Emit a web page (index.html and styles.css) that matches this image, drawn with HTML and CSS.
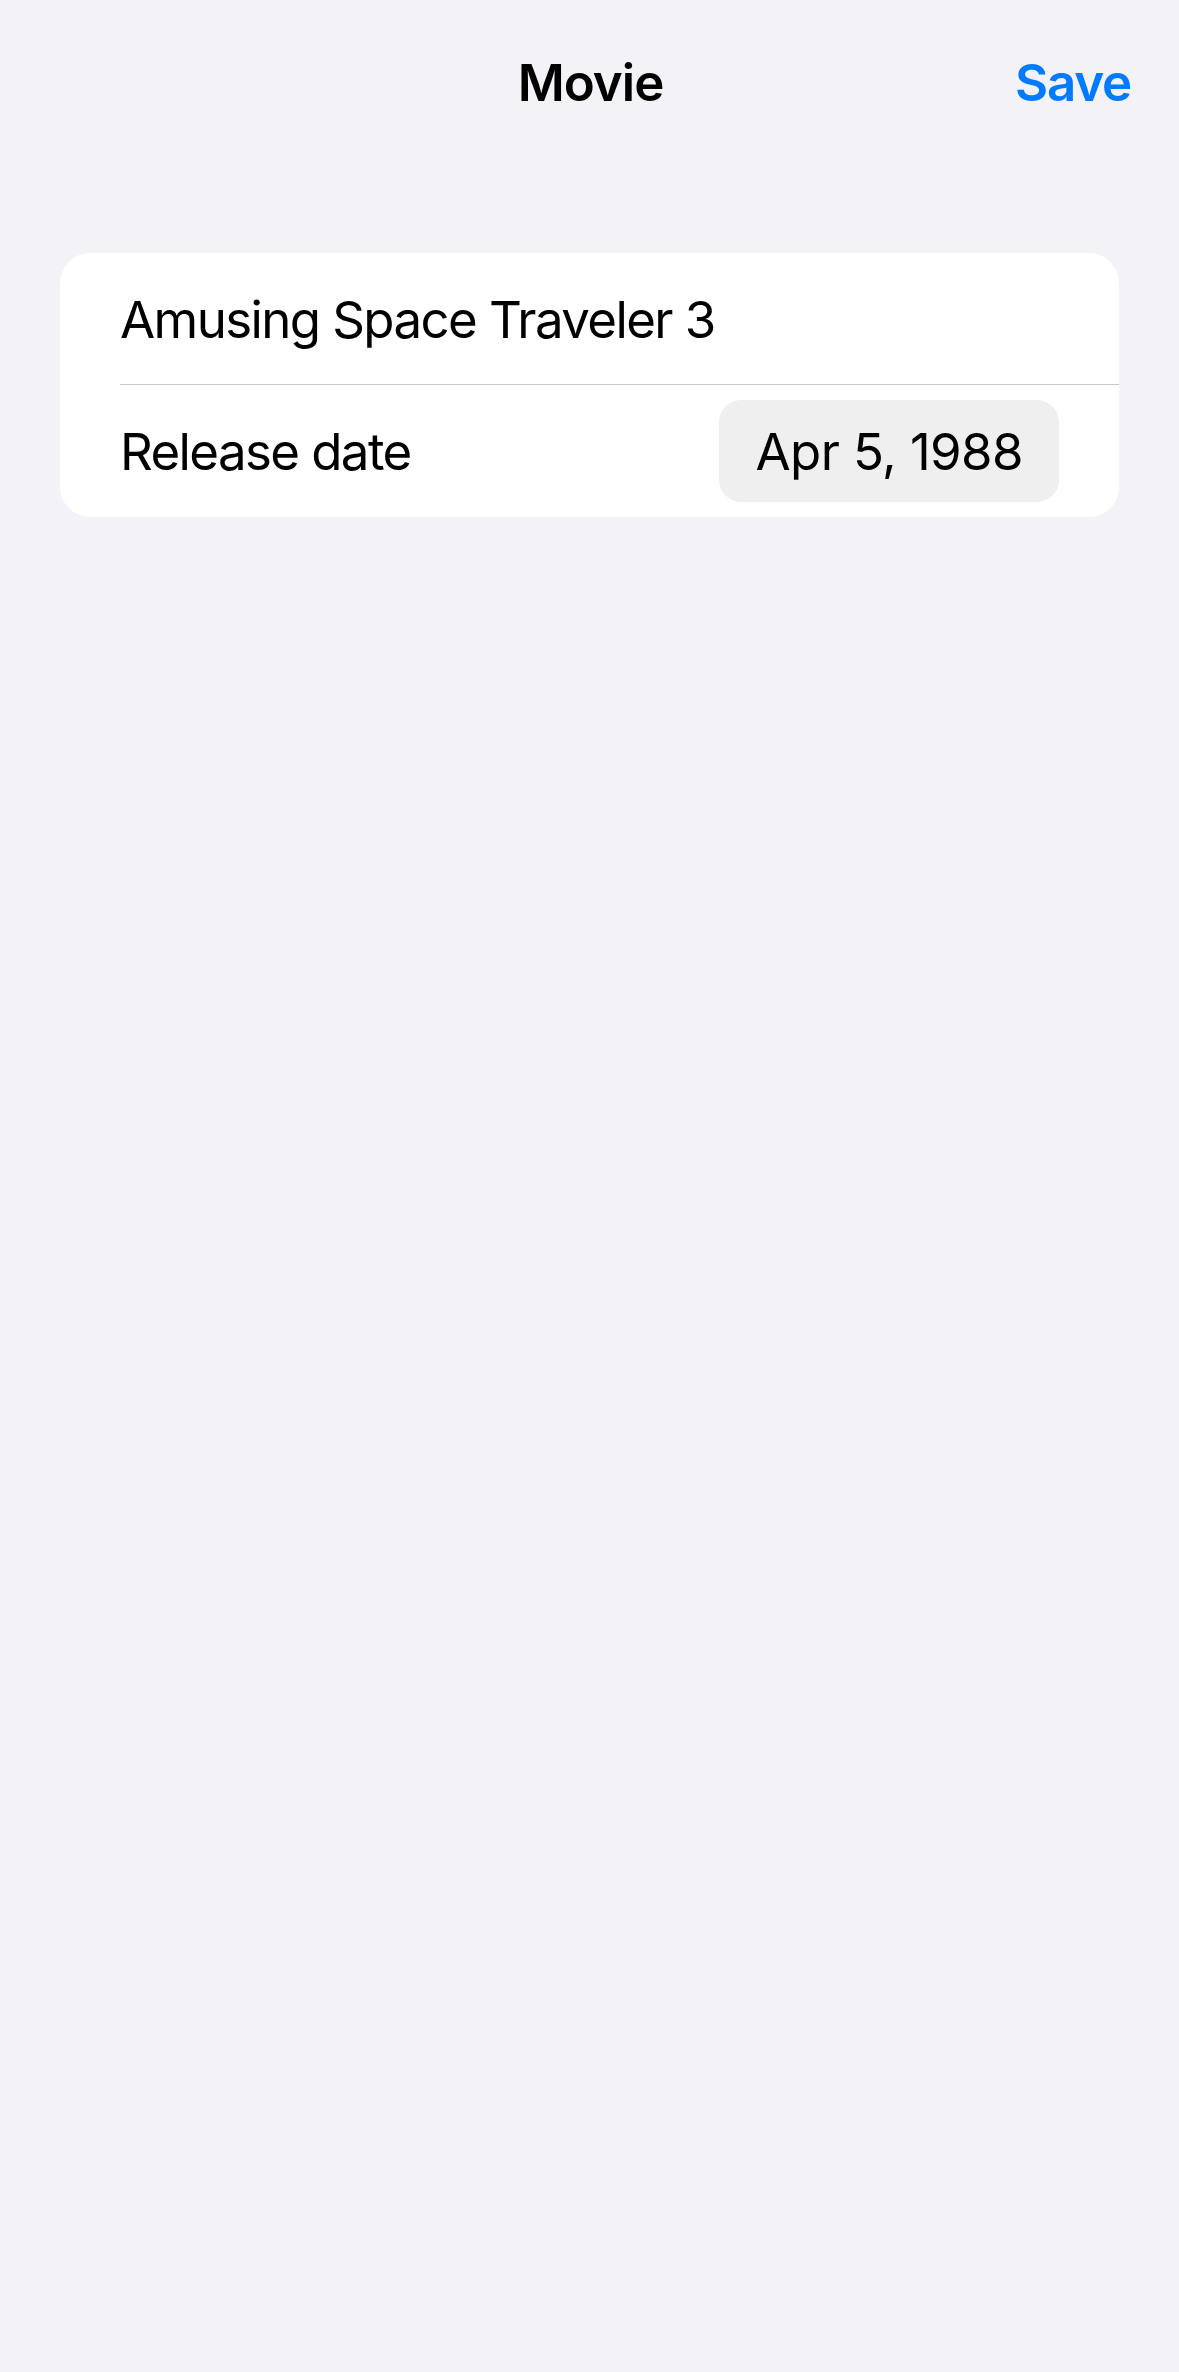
FILE: index.html
```html
<!DOCTYPE html>
<html lang="en">
<head>
<meta charset="utf-8">
<title>Movie</title>
<link rel="stylesheet" href="styles.css">
</head>
<body>
<div class="screen">
  <header class="navbar">
    <div class="nav-side"></div>
    <h1 class="nav-title">Movie</h1>
    <div class="nav-side nav-right"><span class="nav-action">Save</span></div>
  </header>
  <section class="card">
    <div class="row row-first">
      <span class="row-text">Amusing Space Traveler 3</span>
    </div>
    <div class="separator"></div>
    <div class="row row-date">
      <span class="row-text">Release date</span>
      <span class="date-pill">Apr 5, 1988</span>
    </div>
  </section>
</div>
</body>
</html>
```

FILE: styles.css
```css
html, body {
  margin: 0;
  padding: 0;
}
body {
  background: #F2F2F7;
  font-family: Inter, "Noto Sans", "Liberation Sans", sans-serif;
  color: #000;
  width: 1179px;
  height: 2372px;
  overflow: hidden;
}
.screen {
  display: flex;
  flex-direction: column;
}
.navbar {
  display: flex;
  align-items: center;
  padding: 52px 48px 0 50px;
  height: 61px;
}
.nav-side {
  flex: 1;
  display: flex;
}
.nav-right {
  justify-content: flex-end;
}
.nav-title {
  margin: 0;
  font-size: 51px;
  line-height: 61px;
  font-weight: 600;
  letter-spacing: -1px;
}
.nav-action {
  font-size: 51px;
  line-height: 61px;
  font-weight: 600;
  color: #007AFF;
  letter-spacing: -1.2px;
}
.card {
  margin: 140px 60px 0 60px;
  background: #FFFFFF;
  border-radius: 30px;
  display: flex;
  flex-direction: column;
  overflow: hidden;
}
.row {
  display: flex;
  align-items: center;
  justify-content: space-between;
  padding: 0 60px;
}
.row-first {
  height: 131px;
  padding-top: 2px;
  box-sizing: border-box;
}
.row-date {
  height: 132px;
}
.row-text {
  font-size: 51px;
  line-height: 61px;
  font-weight: 400;
  letter-spacing: -1.6px;
}
.separator {
  height: 1px;
  background: #C6C6C8;
  margin-left: 60px;
}
.date-pill {
  background: #EFEFF0;
  border-radius: 22px;
  height: 102px;
  display: flex;
  align-items: center;
  padding: 0 36px;
  font-size: 51px;
  line-height: 61px;
  letter-spacing: -0.6px;
}
```
